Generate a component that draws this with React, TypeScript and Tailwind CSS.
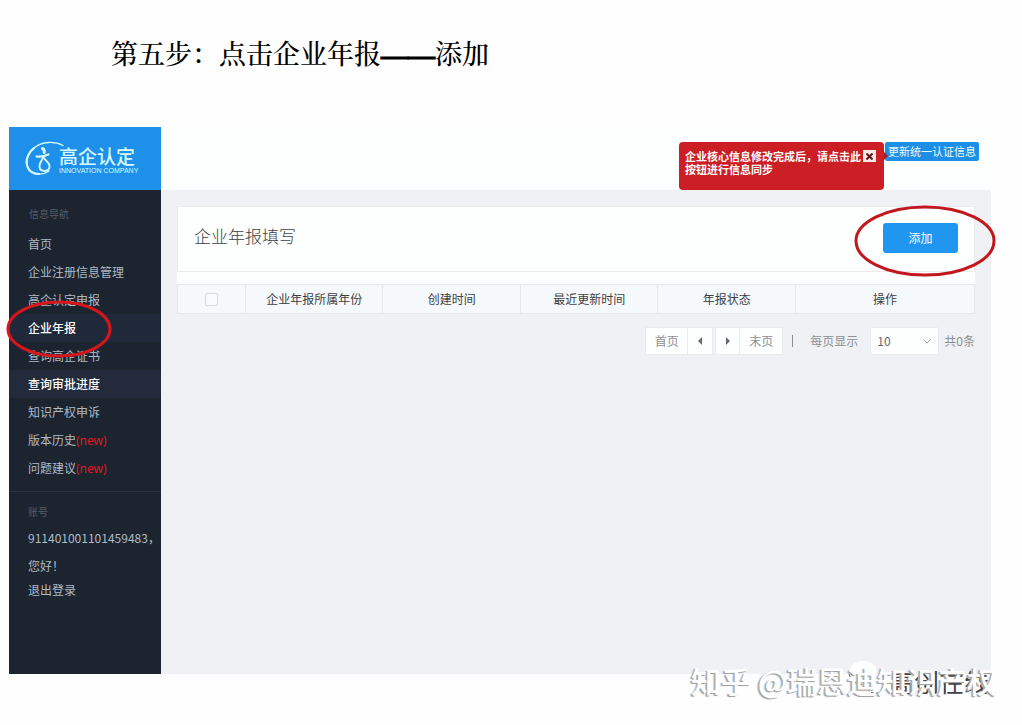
import React, { useState } from 'react'

const navItems = [
  { label: '首页' },
  { label: '企业注册信息管理' },
  { label: '高企认定申报' },
  { label: '企业年报', state: 'current' },
  { label: '查询高企证书' },
  { label: '查询审批进度', state: 'open' },
  { label: '知识产权申诉' },
  { label: '版本历史', isNew: true },
  { label: '问题建议', isNew: true },
]

const columns = ['企业年报所属年份', '创建时间', '最近更新时间', '年报状态']

function itemClass(state?: string) {
  if (state === 'current') return 'bg-[#1f293a] text-white font-medium'
  if (state === 'open') return 'bg-[#222a3b] text-white font-medium'
  return 'text-[#b0bac4]'
}

function Logo() {
  return (
    <div className="flex h-[63px] items-center bg-[#1e90ea] pl-4 text-[#d6fbff]">
      <svg className="h-9 w-10 shrink-0" viewBox="0 0 40 36" fill="none" stroke="currentColor" strokeLinecap="round">
        <path d="M38 4.500C30 0 17 0 9 7C2 13 0 21 3 27C7 34 17 35 24 30" strokeWidth="1.400" />
        <path d="M9 7C2 13 0 21 3 27C5 31 9 33 14 33" strokeWidth="2.200" />
        <path d="M17.500 7.500C19 8 19.500 9 19.200 11.500" strokeWidth="3" />
        <path d="M11.500 15.500C15 16 20 15 23.500 13.500" strokeWidth="2.200" />
        <path d="M18.500 15C18.500 18 15 20 14.500 25C14.500 28.500 17 30 19.500 30C22.500 30 25 28 24.500 24.500C24 21 20 20 18.500 16" strokeWidth="1.900" />
      </svg>
      <div className="-ml-1.5 mt-1">
        <div className="text-[19px] leading-5 font-medium">高企认定</div>
        <div className="pt-px font-['Liberation_Sans',sans-serif] text-[7px] leading-2 whitespace-nowrap">INNOVATION COMPANY</div>
      </div>
    </div>
  )
}

function Sidebar() {
  return (
    <aside className="w-[152px] shrink-0 bg-[#1c2430] text-xs">
      <Logo />
      <nav className="pt-3">
        <h2 className="mb-1 pl-5 text-[10px] leading-6 text-[#545d68]">信息导航</h2>
        <ul>
          {navItems.map(item => (
            <li key={item.label} className={`relative h-7 pl-[19px] leading-7 ${itemClass(item.state)}`}>
              <a href="#">
                {item.label}
                {item.isNew && <span className="font-['Noto_Sans',sans-serif] text-[#e0161f]">(new)</span>}
              </a>
              {item.state === 'current' && (
                <svg className="pointer-events-none absolute -top-4 -left-1 z-10 h-[60px] w-[108px]" viewBox="0 0 108 60" fill="none">
                  <ellipse cx="54" cy="31" rx="51" ry="27" stroke="#d5161c" strokeWidth="3" />
                </svg>
              )}
            </li>
          ))}
        </ul>
      </nav>
      <div className="mt-[9px] border-t border-[#2b3440] pt-2 pl-[19px] text-[#b0bac4]">
        <h2 className="text-[10px] leading-6 text-[#545d68]">账号</h2>
        <p className="leading-7">911401001101459483，您好！</p>
        <a href="#" className="block leading-5">退出登录</a>
      </div>
    </aside>
  )
}

function TopBar() {
  const [showTip, setShowTip] = useState(true)

  return (
    <header className="flex h-[63px] items-start justify-end bg-[#fdfefe] pt-[15px] pr-3 text-[11px]">
      {showTip && (
        <div className="relative mr-px flex h-12 w-[205px] items-start rounded-sm bg-[#cb1e25] pt-2 pl-1.5 text-white">
          <p className="w-[178px] shrink-0 leading-[13px] font-bold">企业核心信息修改完成后，请点击此按钮进行信息同步</p>
          <button onClick={() => setShowTip(false)} aria-label="关闭"
            className="flex h-3 w-[13px] items-center justify-center bg-[#fbe9e6]">
            <svg className="h-[7px] w-[7px]" viewBox="0 0 7 7" stroke="#5c1216" strokeWidth="2">
              <path d="M0.500 0.500L6.500 6.500M6.500 0.500L0.500 6.500" />
            </svg>
          </button>
          <svg className="absolute top-2.5 -right-1 h-2 w-1" viewBox="0 0 4 8">
            <path d="M0 0L4 4L0 8Z" fill="#a61b2c" />
          </svg>
        </div>
      )}
      <button className="h-[19px] w-[94px] rounded-xs bg-[#1f8fe5] text-center leading-[19px] whitespace-nowrap text-[#e8fbff]">更新统一认证信息</button>
    </header>
  )
}

function Pager() {
  const box = 'h-7 border border-[#e9ebee] bg-[#fdfefe]'

  return (
    <div className="mt-[13px] flex items-center justify-end text-xs text-[#8b8f94]">
      <button className={`${box} w-[43px]`}>首页</button>
      <button className={`${box} flex w-[25px] items-center justify-center border-l-0`} aria-label="上一页">
        <svg className="h-2 w-1" viewBox="0 0 4 8" fill="#666a6f"><path d="M4 0L0 4L4 8Z" /></svg>
      </button>
      <button className={`${box} ml-0.5 flex w-[25px] items-center justify-center`} aria-label="下一页">
        <svg className="h-2 w-1" viewBox="0 0 4 8" fill="#666a6f"><path d="M0 0L4 4L0 8Z" /></svg>
      </button>
      <button className={`${box} w-[43px] border-l-0`}>末页</button>
      <span className="mx-[9px] h-3 w-px bg-[#8b8f94]" />
      <label htmlFor="page-size" className="ml-2">每页显示</label>
      <span className="relative ml-3">
        <select id="page-size" className={`${box} block w-[69px] appearance-none rounded-xs pl-1.5 text-[#666a6f]`}>
          <option>10</option>
          <option>20</option>
          <option>50</option>
        </select>
        <svg className="pointer-events-none absolute top-3 right-2 h-[5px] w-2" viewBox="0 0 8 5" fill="none" stroke="#9a9ea3">
          <path d="M0.500 0.500L4 4L7.500 0.500" />
        </svg>
      </span>
      <span className="ml-[5px]">共0条</span>
    </div>
  )
}

function Report() {
  return (
    <main className="px-4 pt-4">
      <section className="bg-[#fdfefe] pb-3">
        <div className="flex h-[66px] items-start justify-between border border-[#e8eaec] px-4 pt-4">
          <h1 className="text-[17px] leading-[26px] font-light text-[#3c3f43]">企业年报填写</h1>
          <div className="relative">
            <button className="h-[30px] w-[75px] rounded-[3px] bg-[#2196f0] text-xs text-white">添加</button>
            <svg className="pointer-events-none absolute -top-[19px] -left-[31px] z-10 h-[74px] w-[144px]" viewBox="0 0 144 74" fill="none">
              <ellipse cx="73" cy="37" rx="69" ry="34" stroke="#c2171d" strokeWidth="3" />
            </svg>
          </div>
        </div>
      </section>
      <table className="w-full table-fixed border-collapse bg-[#f6f9fb] text-xs text-[#3c3f43]">
        <thead>
          <tr className="h-[29px]">
            <th className="w-[68px] border border-[#e6e9ec] font-normal">
              <input type="checkbox" aria-label="全选" className="mx-auto block h-[13px] w-[13px] appearance-none rounded-xs border border-[#d5d8dc] bg-[#fafbfc]" />
            </th>
            {columns.map(c => (
              <th key={c} className="w-[17.25%] border border-[#e6e9ec] font-normal">{c}</th>
            ))}
            <th className="border border-[#e6e9ec] font-normal">操作</th>
          </tr>
        </thead>
      </table>
      <Pager />
    </main>
  )
}

function Watermark() {
  return (
    <div className="pointer-events-none absolute right-[25px] bottom-[24px] z-20 whitespace-nowrap">
      <svg className="absolute top-0 left-[156px] h-10 w-11" viewBox="0 0 44 40" fill="#ffffff">
        <ellipse cx="16" cy="14" rx="14" ry="12" />
        <ellipse cx="29" cy="24" rx="12" ry="10" />
        <path d="M2 15C4 22 10 26 16 26M20 30C25 36 33 35 38 31M34 12L36 18" fill="none" stroke="#55585c" strokeDasharray="3 2" />
      </svg>
      <span className="absolute top-1 right-2 text-[25px] leading-9 text-[#3f4246]">高创在线</span>
      <span className="relative text-[30px] leading-[42px] font-medium text-white [text-shadow:-1px_1px_0_#a3a3a3,-2px_1px_1px_#b5b5b5]">知乎 @瑞恩迪知识产权</span>
    </div>
  )
}

export default function App() {
  return (
    <div className="relative min-h-screen bg-[#fefefe] font-['Noto_Sans_CJK_SC',sans-serif]">
      <p className="pt-[33px] pl-[111px] font-['Liberation_Serif','Noto_Serif_CJK_SC','Noto_Sans_CJK_SC',serif] text-[27px] leading-[44px] font-medium text-black">
        第五步：点击企业年报<b className="font-black [-webkit-text-stroke:1px_black]">——</b>添加
      </p>
      <div className="mt-[50px] mr-[31px] ml-[9px] flex min-h-[547px] bg-[#f0f1f5]">
        <Sidebar />
        <div className="min-w-0 flex-1">
          <TopBar />
          <Report />
        </div>
      </div>
      <Watermark />
    </div>
  )
}
